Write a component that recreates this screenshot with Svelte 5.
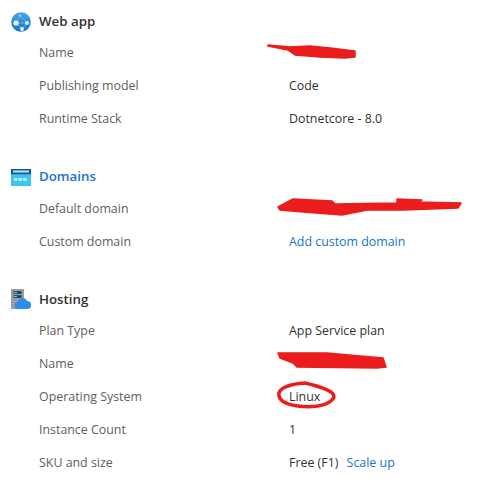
<script>
  const sections = [
    {
      title: 'Web app', icon: 'web', link: false,
      rows: [
        { label: 'Name', value: '' },
        { label: 'Publishing model', value: 'Code' },
        { label: 'Runtime Stack', value: 'Dotnetcore - 8.0' }
      ]
    },
    {
      title: 'Domains', icon: 'www', link: true,
      rows: [
        { label: 'Default domain', value: '' },
        { label: 'Custom domain', value: 'Add custom domain', isLink: true }
      ]
    },
    {
      title: 'Hosting', icon: 'host', link: false,
      rows: [
        { label: 'Plan Type', value: 'App Service plan' },
        { label: 'Name', value: '' },
        { label: 'Operating System', value: 'Linux' },
        { label: 'Instance Count', value: '1' },
        { label: 'SKU and size', value: 'Free (F1)', action: 'Scale up' }
      ]
    }
  ];
</script>

<div class="page">
  {#each sections as s}
    <section class="section">
      <div class="heading" class:tall={s.link}>
        <span class="icon {s.icon}">
          {#if s.icon === 'web'}
            <svg width="20" height="20" viewBox="0 0 20 20">
              <defs>
                <linearGradient id="globe" x1="0" y1="0" x2="0" y2="1">
                  <stop offset="0" stop-color="#4aa6ec" />
                  <stop offset="1" stop-color="#1572cc" />
                </linearGradient>
              </defs>
              <circle cx="10" cy="10" r="9.800" fill="url(#globe)" />
              <path d="M5 11L9 3.500L16 11L11 17L5 11M5 11H16" fill="none" stroke="#7fc0f0" stroke-width=".7" />
              <circle cx="5" cy="11" r="2.600" fill="#eef7fd" />
              <circle cx="16" cy="11" r="1.900" fill="#dceefb" />
              <circle cx="11" cy="17" r="1.900" fill="#f2f9fe" />
              <circle cx="9" cy="3.500" r="1.100" fill="#b4daf5" />
            </svg>
          {:else if s.icon === 'www'}
            <svg width="20" height="17" viewBox="0 0 20 17">
              <rect width="20" height="17" fill="#3cc6ee" />
              <rect width="20" height="5" fill="#0f5c9c" />
              <rect x="2" y="1.500" width="16" height="2" fill="#bfe6f5" />
              <rect x="0" y="5" width="20" height="1" fill="#2aa8dc" />
              <path d="M3 9l.8 3 .8-3 .8 3 .8-3M7.600 9l.8 3 .8-3 .8 3 .8-3M12.200 9l.8 3 .8-3 .8 3 .8-3" fill="none" stroke="#e8f9fd" stroke-width=".8" />
            </svg>
          {:else}
            <svg width="20" height="20" viewBox="0 0 20 20">
              <rect x="0" width="13" height="20" fill="#9a9c9f" />
              <rect x="2.500" y="2.200" width="8" height="2.600" fill="#103f63" />
              <rect x="2.500" y="6.200" width="8" height="2.600" fill="#103f63" />
              <rect x="3" y="3" width="3" height="1" fill="#4fd0f0" />
              <rect x="3" y="7" width="3" height="1" fill="#4fd0f0" />
              <path d="M7.500 20a3.500 3.500 0 0 1-.7-7 4.800 4.800 0 0 1 9.200-1 4 4 0 0 1 .2 8z" fill="#2b8fe8" />
            </svg>
          {/if}
        </span>
        <h2 class:link={s.link}>{s.title}</h2>
      </div>
      {#each s.rows as r}
        <div class="row">
          <span class="label">{r.label}</span>
          <span class="value" class:link={r.isLink}>
            {r.value}
            {#if r.action}<span class="link action">{r.action}</span>{/if}
          </span>
        </div>
      {/each}
    </section>
  {/each}

  <svg class="scribbles" width="483" height="495" viewBox="0 0 483 495">
    <g fill="#ea1c1c" stroke="#ea1c1c" stroke-width="1.500" stroke-linejoin="round" stroke-linecap="round">
      <path d="M268 45 L290 47 L310 46 L330 48 L355 51 L355 57 L345 58 L320 57 L295 55 L288 50 L268 46 z" />
      <path d="M278 207 L293 199 L332 201 L335 204 L397 203 L397 199 L422 200 L418 202 L461 203 L458 208 L403 210 L367 210 L342 215 L303 212 L280 210 z" />
      <path d="M278 353 L327 353 L360 356 L383 358 L386 367 L377 368 L297 367 L293 363 L280 358 z" />
    </g>
    <path class="ring" d="M305 383 C290 384 277 388 279 396 C281 405 300 408 318 406 C330 404 336 398 333 394 C329 389 318 386 305 383" />
  </svg>
</div>

<style>
  :global(body) {
    margin: 0;
    background: #fff;
  }
  .page {
    position: relative;
    width: 483px;
    height: 495px;
    padding-top: 6px;
    box-sizing: border-box;
    overflow: hidden;
    font-family: "Open Sans", "Noto Sans", sans-serif;
    font-size: 12.4px;
    color: #323130;
  }
  .section {
    margin-bottom: 26px;
  }
  .heading {
    display: flex;
    align-items: center;
    height: 30px;
    padding-left: 11px;
  }
  .heading.tall {
    height: 31px;
    align-items: flex-start;
    padding-top: 6px;
    box-sizing: border-box;
  }
  .icon {
    width: 28px;
    display: flex;
    align-items: center;
  }
  .icon.web {
    margin-top: 2px;
  }
  .icon.www {
    margin-top: 2px;
  }
  h2 {
    margin: 0;
    font-size: 13.300px;
    font-weight: 600;
    color: #323130;
  }
  h2.link {
    color: #1673cf;
  }
  .row {
    display: grid;
    grid-template-columns: 250px 1fr;
    align-items: center;
    height: 33px;
    padding-left: 39px;
  }
  .label {
    color: #605e5c;
  }
  .link {
    color: #1673cf;
  }
  .action {
    margin-left: 5px;
  }
  .scribbles {
    position: absolute;
    inset: 0;
    pointer-events: none;
  }
  .ring {
    fill: none;
    stroke: #ea1c1c;
    stroke-width: 3.500;
    stroke-linecap: round;
  }
</style>
